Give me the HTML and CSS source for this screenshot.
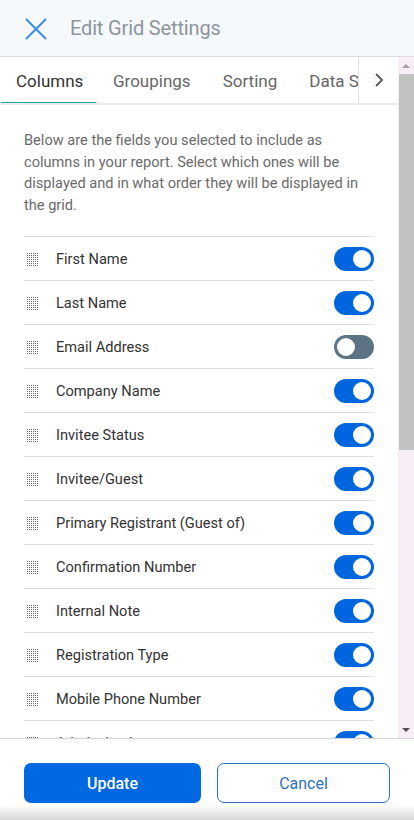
FILE: index.html
```html
<!DOCTYPE html>
<html>
<head>
<meta charset="utf-8">
<link rel="stylesheet" href="styles.css">
</head>
<body>
<div class="app">
  <header class="header">
    <svg class="close" width="24" height="24" viewBox="0 0 24 24"><path d="M2 2 L22 22 M22 2 L2 22" stroke="#3b8fe4" stroke-width="2" fill="none"/></svg>
    <span class="title">Edit Grid Settings</span>
  </header>
  <div class="body">
    <div class="main">
      <nav class="tabs">
        <div class="tablist">
          <span class="tab active">Columns</span>
          <span class="tab">Groupings</span>
          <span class="tab">Sorting</span>
          <span class="tab">Data Sources</span>
        </div>
        <div class="tabnext">
          <svg width="12" height="18" viewBox="0 0 12 18"><path d="M3 3 L9 9 L3 15" stroke="#555" stroke-width="1.8" fill="none"/></svg>
        </div>
      </nav>
      <p class="desc">Below are the fields you selected to include as columns in your report. Select which ones will be displayed and in what order they will be displayed in the grid.</p>
      <ul class="list">
        <li class="row"><span class="handle"></span><span class="label">First Name</span><span class="toggle on"></span></li>
        <li class="row"><span class="handle"></span><span class="label">Last Name</span><span class="toggle on"></span></li>
        <li class="row"><span class="handle"></span><span class="label">Email Address</span><span class="toggle off"></span></li>
        <li class="row"><span class="handle"></span><span class="label">Company Name</span><span class="toggle on"></span></li>
        <li class="row"><span class="handle"></span><span class="label">Invitee Status</span><span class="toggle on"></span></li>
        <li class="row"><span class="handle"></span><span class="label">Invitee/Guest</span><span class="toggle on"></span></li>
        <li class="row"><span class="handle"></span><span class="label">Primary Registrant (Guest of)</span><span class="toggle on"></span></li>
        <li class="row"><span class="handle"></span><span class="label">Confirmation Number</span><span class="toggle on"></span></li>
        <li class="row"><span class="handle"></span><span class="label">Internal Note</span><span class="toggle on"></span></li>
        <li class="row"><span class="handle"></span><span class="label">Registration Type</span><span class="toggle on"></span></li>
        <li class="row"><span class="handle"></span><span class="label">Mobile Phone Number</span><span class="toggle on"></span></li>
        <li class="row"><span class="handle"></span><span class="label">Admission Item</span><span class="toggle on"></span></li>
      </ul>
    </div>
    <div class="scrollbar">
      <span class="arrow up"></span>
      <span class="thumb"></span>
      <span class="track-rest"></span>
      <span class="arrow down"></span>
    </div>
  </div>
  <footer class="footer">
    <button class="btn primary">Update</button>
    <button class="btn secondary">Cancel</button>
  </footer>
  <div class="shadow"></div>
</div>
</body>
</html>
```
FILE: styles.css
```css
* { box-sizing: border-box; }
html, body { margin: 0; padding: 0; }
body {
  font-family: Roboto, "Liberation Sans", sans-serif;
  background: #fff;
  width: 414px;
  height: 820px;
  overflow: hidden;
}
.app { display: flex; flex-direction: column; height: 820px; }
.header {
  height: 57px;
  flex: none;
  background: #f5f9fb;
  border-bottom: 1px solid #dcdfe2;
  display: flex;
  align-items: center;
  padding-left: 24px;
}
.close { flex: none; margin-top: 2px; }
.title {
  margin-left: 22px;
  font-size: 20px;
  color: #8d959d;
  font-weight: 400;
  letter-spacing: -0.15px;
}
.body { display: flex; height: 681px; flex: none; }
.main { width: 398px; overflow: hidden; }
.tabs {
  height: 48px;
  display: flex;
  border-bottom: 2px solid #ebebeb;
}
.tablist { width: 358px; display: flex; overflow: hidden; white-space: nowrap; }
.tab {
  font-size: 17px;
  color: #666;
  padding: 0 16px;
  line-height: 48px;
  position: relative;
}
.tab.active { color: #333; width: 97px; }
.tab.active::after {
  content: "";
  position: absolute;
  left: 0; right: 0; bottom: -2px;
  height: 3px;
  background: #17a395;
  border-radius: 2px 2px 0 0;
}
.tabnext {
  width: 40px;
  border-left: 1px solid #e1e1e1;
  display: flex;
  align-items: center;
  justify-content: center;
}
.desc {
  margin: 25px 24px 0 24px;
  font-size: 14.6px;
  line-height: 21.5px;
  color: #6b6b6b;
}
.list {
  list-style: none;
  margin: 20px 24px 0 24px;
  padding: 0;
  border-top: 1px solid #e0e0e0;
}
.row {
  height: 44px;
  border-bottom: 1px solid #e0e0e0;
  display: flex;
  align-items: center;
  padding-left: 2px;
}
.handle {
  flex: none;
  display: block;
  width: 12px;
  height: 14px;
  background-image:
    linear-gradient(90deg, #fff 0 1px, transparent 1px 2px),
    linear-gradient(180deg, #fff 0 1px, transparent 1px 2px),
    linear-gradient(#6a6a6a, #6a6a6a);
  background-size: 2px 2px, 2px 2px, 100% 100%;
  background-repeat: repeat, repeat, no-repeat;
}
.label {
  margin-left: 18px;
  font-size: 14.6px;
  color: #333;
  flex: 1;
}
.toggle {
  width: 40px;
  height: 24px;
  border-radius: 12px;
  position: relative;
  flex: none;
}
.toggle.on { background: #0066e0; }
.toggle.off { background: #5b7383; }
.toggle::after {
  content: "";
  position: absolute;
  top: 3px;
  width: 18px;
  height: 18px;
  border-radius: 50%;
  background: #fff;
}
.toggle.on::after { right: 3px; }
.toggle.off::after { left: 3px; }
.scrollbar {
  width: 16px;
  background: #f7eef7;
  display: flex;
  flex-direction: column;
  align-items: stretch;
}
.arrow { height: 17px; flex: none; display: flex; justify-content: center; align-items: center; }
.arrow::before {
  content: "";
  border-left: 4px solid transparent;
  border-right: 4px solid transparent;
}
.arrow.up::before { border-bottom: 4px solid #a3a3a3; }
.arrow.down::before { border-top: 4px solid #505050; }
.thumb { height: 376px; margin-left: 1px; background: #c1c1c1; flex: none; }
.track-rest { flex: 1; }
.footer {
  height: 68px;
  flex: none;
  border-top: 1px solid #d6d6d6;
  display: flex;
  gap: 16px;
  padding: 24px 24px 0 24px;
  background: #fff;
}
.btn {
  height: 40px;
  border-radius: 7px;
  font-family: inherit;
  font-size: 16px;
}
.btn.primary {
  width: 177px;
  background: #0068e1;
  color: #fff;
  border: none;
  font-weight: 500;
}
.btn.secondary {
  width: 173px;
  background: #fff;
  color: #2b6fc0;
  border: 1px solid #2b6fc0;
}
.shadow {
  flex: 1;
  background: linear-gradient(#fdfdfd, #d4d4d4);
}
```
